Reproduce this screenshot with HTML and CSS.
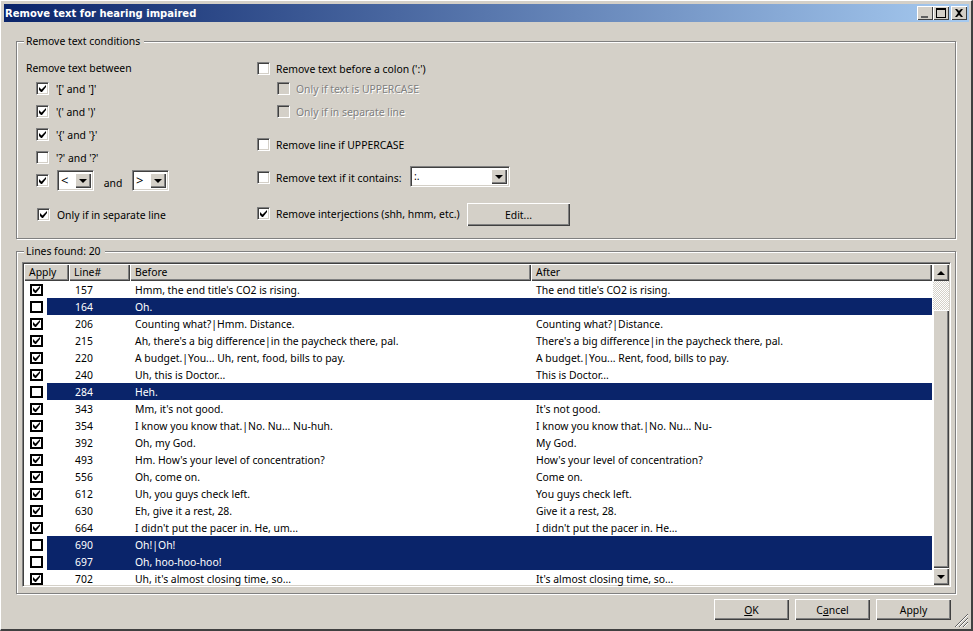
FILE: index.html
```html
<!DOCTYPE html>
<html lang="en">
<head>
    <meta charset="UTF-8">
    <title>Remove text for hearing impaired</title>
    <link rel="stylesheet" href="styles.css">
</head>
<body>
    <svg class="defs" width="0" height="0">
        <symbol id="tick" viewBox="0 0 9 9"><path d="M1 3v3l2 2h1l4-5V1L3.500 5.500z"/></symbol>
    </svg>

    <div class="window">
        <div class="titlebar">
            <span class="title">Remove text for hearing impaired</span>
            <div class="winbtns">
                <span class="winbtn"><svg width="16" height="14"><rect x="4" y="10" width="7" height="2" fill="#606060"/></svg></span>
                <span class="winbtn"><svg width="16" height="14"><path d="M3 2h10v10H3zM4 4v7h8V4z" fill-rule="evenodd"/></svg></span>
                <span class="winbtn closebtn"><svg width="16" height="14"><path d="M4 3h2l2 2 2-2h2L9 7l3 4h-2L8 9l-2 2H4l3-4z"/></svg></span>
            </div>
        </div>

        <fieldset class="group conditions">
            <legend>Remove text conditions</legend>
            <div class="col-left">
                <div class="between-title">Remove text between</div>
                <label class="opt"><span class="chk"><svg><use href="#tick"/></svg></span>'[' and ']'</label>
                <label class="opt"><span class="chk"><svg><use href="#tick"/></svg></span>'(' and ')'</label>
                <label class="opt"><span class="chk"><svg><use href="#tick"/></svg></span>'{' and '}'</label>
                <label class="opt"><span class="chk"></span>'?' and '?'</label>
                <div class="opt">
                    <span class="chk"><svg><use href="#tick"/></svg></span>
                    <span class="combo combo-small first-combo"><span class="combo-val">&lt;</span><span class="arrow-btn"><i class="arrow-down"></i></span></span>
                    <span class="and">and</span>
                    <span class="combo combo-small"><span class="combo-val">&gt;</span><span class="arrow-btn"><i class="arrow-down"></i></span></span>
                </div>
                <label class="opt opt-separate"><span class="chk"><svg><use href="#tick"/></svg></span>Only if in separate line</label>
            </div>
            <div class="col-right">
                <label class="opt2"><span class="chk"></span>Remove text before a colon (':')</label>
                <label class="opt2 sub first-sub disabled"><span class="chk"></span>Only if text is UPPERCASE</label>
                <label class="opt2 sub disabled"><span class="chk"></span>Only if in separate line</label>
                <label class="opt2 gap-a"><span class="chk"></span>Remove line if UPPERCASE</label>
                <div class="opt2 gap-a"><span class="chk"></span><span class="label-contains">Remove text if it contains:</span><span class="combo combo-wide"><span class="combo-val">:.</span><span class="arrow-btn"><i class="arrow-down"></i></span></span></div>
                <div class="opt2 gap-b"><span class="chk"><svg><use href="#tick"/></svg></span><span class="label-interj">Remove interjections (shh, hmm, etc.)</span><button class="btn edit-btn">Edit...</button></div>
            </div>
        </fieldset>

        <fieldset class="group lines">
            <legend>Lines found: 20</legend>
            <div class="listview">
                <div class="list-main">
                    <div class="list-head">
                        <span class="head-cell c-apply">Apply</span>
                        <span class="head-cell c-line">Line#</span>
                        <span class="head-cell c-before">Before</span>
                        <span class="head-cell c-after">After</span>
                    </div>
                    <div class="row"><span class="flag"><svg><use href="#tick"/></svg></span><div class="cells"><span class="c-line">157</span><span class="c-before">Hmm, the end title's CO2 is rising.</span><span class="c-after">The end title's CO2 is rising.</span></div></div>
                    <div class="row sel"><span class="flag"></span><div class="cells"><span class="c-line">164</span><span class="c-before">Oh.</span><span class="c-after"></span></div></div>
                    <div class="row"><span class="flag"><svg><use href="#tick"/></svg></span><div class="cells"><span class="c-line">206</span><span class="c-before">Counting what?|Hmm. Distance.</span><span class="c-after">Counting what?|Distance.</span></div></div>
                    <div class="row"><span class="flag"><svg><use href="#tick"/></svg></span><div class="cells"><span class="c-line">215</span><span class="c-before">Ah, there's a big difference|in the paycheck there, pal.</span><span class="c-after">There's a big difference|in the paycheck there, pal.</span></div></div>
                    <div class="row"><span class="flag"><svg><use href="#tick"/></svg></span><div class="cells"><span class="c-line">220</span><span class="c-before">A budget.|You... Uh, rent, food, bills to pay.</span><span class="c-after">A budget.|You... Rent, food, bills to pay.</span></div></div>
                    <div class="row"><span class="flag"><svg><use href="#tick"/></svg></span><div class="cells"><span class="c-line">240</span><span class="c-before">Uh, this is Doctor...</span><span class="c-after">This is Doctor...</span></div></div>
                    <div class="row sel"><span class="flag"></span><div class="cells"><span class="c-line">284</span><span class="c-before">Heh.</span><span class="c-after"></span></div></div>
                    <div class="row"><span class="flag"><svg><use href="#tick"/></svg></span><div class="cells"><span class="c-line">343</span><span class="c-before">Mm, it's not good.</span><span class="c-after">It's not good.</span></div></div>
                    <div class="row"><span class="flag"><svg><use href="#tick"/></svg></span><div class="cells"><span class="c-line">354</span><span class="c-before">I know you know that.|No. Nu... Nu-huh.</span><span class="c-after">I know you know that.|No. Nu... Nu-</span></div></div>
                    <div class="row"><span class="flag"><svg><use href="#tick"/></svg></span><div class="cells"><span class="c-line">392</span><span class="c-before">Oh, my God.</span><span class="c-after">My God.</span></div></div>
                    <div class="row"><span class="flag"><svg><use href="#tick"/></svg></span><div class="cells"><span class="c-line">493</span><span class="c-before">Hm. How's your level of concentration?</span><span class="c-after">How's your level of concentration?</span></div></div>
                    <div class="row"><span class="flag"><svg><use href="#tick"/></svg></span><div class="cells"><span class="c-line">556</span><span class="c-before">Oh, come on.</span><span class="c-after">Come on.</span></div></div>
                    <div class="row"><span class="flag"><svg><use href="#tick"/></svg></span><div class="cells"><span class="c-line">612</span><span class="c-before">Uh, you guys check left.</span><span class="c-after">You guys check left.</span></div></div>
                    <div class="row"><span class="flag"><svg><use href="#tick"/></svg></span><div class="cells"><span class="c-line">630</span><span class="c-before">Eh, give it a rest, 28.</span><span class="c-after">Give it a rest, 28.</span></div></div>
                    <div class="row"><span class="flag"><svg><use href="#tick"/></svg></span><div class="cells"><span class="c-line">664</span><span class="c-before">I didn't put the pacer in. He, um...</span><span class="c-after">I didn't put the pacer in. He...</span></div></div>
                    <div class="row sel"><span class="flag"></span><div class="cells"><span class="c-line">690</span><span class="c-before">Oh!|Oh!</span><span class="c-after"></span></div></div>
                    <div class="row sel"><span class="flag"></span><div class="cells"><span class="c-line">697</span><span class="c-before">Oh, hoo-hoo-hoo!</span><span class="c-after"></span></div></div>
                    <div class="row"><span class="flag"><svg><use href="#tick"/></svg></span><div class="cells"><span class="c-line">702</span><span class="c-before">Uh, it's almost closing time, so...</span><span class="c-after">It's almost closing time, so...</span></div></div>
                </div>
                <div class="scrollbar">
                    <span class="arrow-btn scroll-btn"><i class="arrow-up"></i></span>
                    <span class="track"></span>
                    <span class="thumb"></span>
                    <span class="arrow-btn scroll-btn"><i class="arrow-down"></i></span>
                </div>
            </div>
        </fieldset>

        <div class="footer">
            <button class="btn foot-btn"><u>O</u>K</button>
            <button class="btn foot-btn">C<u>a</u>ncel</button>
            <button class="btn foot-btn">Apply</button>
            <svg class="grip" width="14" height="14">
                <path d="M14 1L1 14M14 5L5 14M14 9L9 14" stroke="#606060" fill="none"/>
                <path d="M14 2L2 14M14 6L6 14M14 10L10 14" stroke="#fff" fill="none"/>
            </svg>
        </div>
    </div>
</body>
</html>
```

FILE: styles.css
```css
* {
    box-sizing: border-box;
}

html, body {
    margin: 0;
    height: 100%;
    overflow: hidden;
}

body {
    font-family: "Noto Sans", sans-serif;
    font-size: 10.4px;
    color: #000;
    background-color: #d4d0c8;
}

.defs {
    position: absolute;
}

.window {
    width: 973px;
    height: 631px;
    padding: 4px 2px 2px 4px;
    background-color: #d4d0c8;
    border-style: solid;
    border-width: 1px 2px 2px 1px;
    border-color: #fff #404040 #404040 #fff;
    display: flex;
    flex-direction: column;
}

.titlebar {
    height: 18px;
    flex: none;
    margin: -1px 0 0 -1px;
    padding: 0 2px 0 1px;
    display: flex;
    align-items: center;
    justify-content: space-between;
    background: linear-gradient(to right, #0a246a, #a6caf0);
    color: white;
}

.title {
    font-family: "DejaVu Sans", sans-serif;
    font-weight: bold;
    font-size: 10px;
}

.winbtns {
    display: flex;
}

.winbtn {
    width: 16px;
    height: 14px;
    background: #d4d0c8;
    box-shadow: inset 1px 1px 0 #fff, inset -1px -1px 0 #404040;
    display: block;
}

.winbtn svg {
    display: block;
}

.closebtn {
    margin-left: 2px;
}

.group {
    padding: 0;
    border: 1px solid #808080;
    box-shadow: inset 1px 1px 0 #fff, 1px 1px 0 #fff;
    min-width: 0;
}

.group legend {
    padding: 0 4px 0 2px;
    margin-left: 7px;
    line-height: 13px;
    background: #d4d0c8;
}

.conditions {
    margin: 13px 0 0 11px;
    width: 940px;
    height: 204px;
    padding-top: 12px;
    display: flex;
}

.col-left {
    width: 240px;
    padding-left: 9px;
    flex: none;
}

.between-title {
    height: 17px;
    line-height: 17px;
}

.opt {
    height: 23px;
    display: flex;
    align-items: center;
    padding-left: 10px;
}

.opt .chk {
    margin-right: 7px;
}

.first-combo {
    margin-left: 1px;
}

.and {
    width: 38px;
    text-align: center;
    padding-top: 4px;
}

.opt-separate {
    margin-top: 11px;
    padding-left: 11px;
}

.chk {
    width: 13px;
    height: 13px;
    flex: none;
    background: #fff;
    border-style: solid;
    border-width: 1px;
    border-color: #808080 #fff #fff #808080;
    box-shadow: inset 1px 1px 0 #404040, inset -1px -1px 0 #d4d0c8;
    display: block;
}

.chk svg {
    display: block;
    width: 9px;
    height: 9px;
    margin: 1px;
}

.col-right {
    margin-top: -3px;
}

.opt2 {
    height: 23px;
    display: flex;
    align-items: center;
    white-space: nowrap;
}

.opt2 .chk {
    margin-right: 6px;
}

.sub {
    padding-left: 20px;
}

.first-sub {
    margin-top: -3px;
}

.disabled {
    color: #808080;
    text-shadow: 1px 1px 0 #fff;
}

.disabled .chk {
    background: #d4d0c8;
}

.gap-a {
    margin-top: 10px;
}

.gap-b {
    margin-top: 13px;
}

.label-contains {
    width: 134px;
}

.label-interj {
    width: 191px;
}

.combo {
    display: flex;
    height: 21px;
    padding: 2px;
    background: #fff;
    border: 1px solid;
    border-color: #808080 #fff #fff #808080;
    box-shadow: inset 1px 1px 0 #404040, inset -1px -1px 0 #d4d0c8;
}

.combo-small {
    width: 37px;
    font-size: 13px;
}

.combo-wide {
    width: 100px;
    margin-top: -2px;
}

.combo-val {
    flex: 1;
    padding-left: 1px;
    line-height: 15px;
}

.arrow-btn {
    width: 16px;
    flex: none;
    display: flex;
    align-items: center;
    justify-content: center;
    background: #d4d0c8;
    box-shadow: inset 1px 1px 0 #fff, inset -1px -1px 0 #404040, inset -2px -2px 0 #808080;
}

.arrow-down, .arrow-up {
    display: block;
    width: 8px;
    height: 4px;
    border-left: 4px solid transparent;
    border-right: 4px solid transparent;
}

.arrow-down {
    border-top: 4px solid #000;
}

.arrow-up {
    border-bottom: 4px solid #000;
}

.btn {
    font: inherit;
    color: #000;
    padding: 0;
    background: #d4d0c8;
    border: none;
    box-shadow: inset 1px 1px 0 #fff, inset -1px -1px 0 #404040, inset -2px -2px 0 #808080;
}

.edit-btn {
    width: 103px;
    height: 23px;
    margin-top: 2px;
}

.lines {
    margin: 6px 0 0 11px;
    width: 940px;
    height: 349px;
    padding-top: 4px;
}

.listview {
    width: 929px;
    height: 325px;
    margin-left: 5px;
    display: flex;
    border: 1px solid;
    border-color: #808080 #fff #fff #808080;
    box-shadow: inset 1px 1px 0 #404040, inset -1px -1px 0 #d4d0c8;
    padding: 1px;
    background: #fff;
}

.list-main {
    width: 909px;
    padding-right: 1px;
    flex: none;
}

.list-head {
    display: flex;
    height: 17px;
    background: #d4d0c8;
}

.head-cell {
    line-height: 16px;
    background: #d4d0c8;
    box-shadow: inset 1px 1px 0 #fff, inset -1px -1px 0 #404040, inset -2px -2px 0 #808080;
    padding-left: 5px;
}

.list-head .c-apply {
    width: 45px;
}

.list-head .c-line {
    width: 61px;
}

.list-head .c-before {
    width: 401px;
}

.list-head .c-after {
    flex: 1;
}

.row {
    display: flex;
    height: 17px;
    line-height: 19px;
}

.flag {
    position: relative;
    display: block;
    width: 23px;
    flex: none;
}

.flag::after {
    content: "";
    position: absolute;
    box-sizing: border-box;
    left: 6px;
    top: 3px;
    width: 13px;
    height: 12px;
    border: 2px solid #000;
}

.flag svg {
    position: absolute;
    left: 8px;
    top: 4px;
    width: 9px;
    height: 9px;
}

.cells {
    flex: 1;
    display: flex;
}

.sel .cells {
    background: #0a246a;
    color: #fff;
}

.cells .c-line {
    width: 83px;
    padding-left: 28px;
}

.cells .c-before {
    width: 401px;
    padding-left: 5px;
}

.cells .c-after {
    flex: 1;
    padding-left: 5px;
}

.scrollbar {
    width: 16px;
    flex: none;
    display: flex;
    flex-direction: column;
}

.scroll-btn {
    height: 17px;
    width: 16px;
}

.track {
    height: 29px;
    background: repeating-conic-gradient(#d4d0c8 0 25%, #fff 0 50%) 0 0 / 2px 2px;
}

.thumb {
    flex: 1;
    background: #d4d0c8;
    box-shadow: inset 1px 1px 0 #fff, inset -1px -1px 0 #404040, inset -2px -2px 0 #808080;
}

.footer {
    flex: 1;
    position: relative;
    display: flex;
    justify-content: flex-end;
    align-items: flex-start;
    gap: 6px;
    padding: 5px 18px 0 0;
}

.foot-btn {
    width: 75px;
    height: 21px;
}

.grip {
    position: absolute;
    right: 1px;
    bottom: 0;
}
```
